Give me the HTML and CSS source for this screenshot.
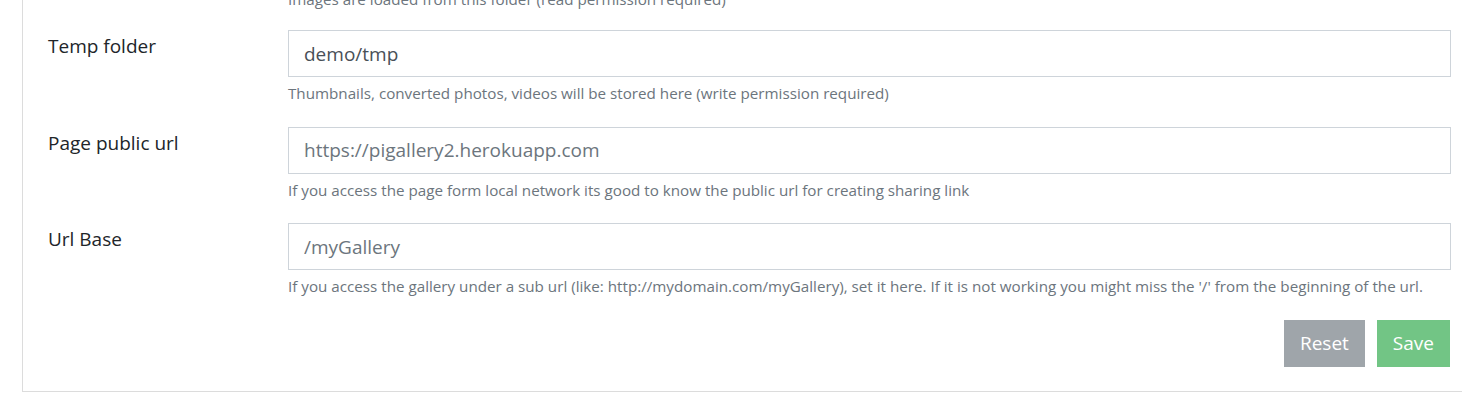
FILE: index.html
```html
<!DOCTYPE html>
<html lang="en">
<head>
<meta charset="utf-8">
<title>Settings</title>
<link rel="stylesheet" href="styles.css">
</head>
<body>
<div class="card">
  <div class="card-body">
    <div class="prev-help">Images are loaded from this folder (read permission required)</div>
    <div class="form-row">
      <label class="form-label" for="tmp">Temp folder</label>
      <div class="form-field">
        <input id="tmp" class="form-input" type="text" value="demo/tmp">
        <div class="form-help">Thumbnails, converted photos, videos will be stored here (write permission required)</div>
      </div>
    </div>
    <div class="form-row">
      <label class="form-label" for="pub">Page public url</label>
      <div class="form-field">
        <input id="pub" class="form-input" type="text" placeholder="https://pigallery2.herokuapp.com">
        <div class="form-help">If you access the page form local network its good to know the public url for creating sharing link</div>
      </div>
    </div>
    <div class="form-row">
      <label class="form-label" for="base">Url Base</label>
      <div class="form-field">
        <input id="base" class="form-input" type="text" placeholder="/myGallery">
        <div class="form-help">If you access the gallery under a sub url (like: http://mydomain.com/myGallery), set it here. If it is not working you might miss the '/' from the beginning of the url.</div>
      </div>
    </div>
    <div class="actions">
      <button class="btn btn-reset" disabled>Reset</button>
      <button class="btn btn-save" disabled>Save</button>
    </div>
  </div>
</div>
</body>
</html>
```
FILE: styles.css
```css
html, body {
  margin: 0;
  padding: 0;
  background: #ffffff;
  font-family: "Open Sans", "Noto Sans", sans-serif;
  color: #212529;
  overflow: hidden;
}

.card {
  margin-left: 22px;
  margin-top: -12px;
  width: 1460px;
  border-left: 1px solid #dcdcdc;
  border-bottom: 1px solid #dcdcdc;
}

.card-body {
  padding: 0 0 24px 25px;
}

.prev-help {
  margin-left: 240px;
  font-size: 15.2px;
  line-height: 22px;
  color: #6c757d;
  margin-bottom: 20px;
}

.form-row {
  display: flex;
  margin-bottom: 22.5px;
}

.form-label {
  width: 240px;
  flex: none;
  font-size: 19px;
  line-height: 30px;
  padding-top: 1px;
}

.form-field {
  width: 1163px;
  flex: none;
}

.form-input {
  display: block;
  box-sizing: border-box;
  width: 100%;
  height: 47px;
  margin: 0;
  padding: 0 15px;
  border: 1px solid #ced4da;
  border-radius: 0;
  font-family: inherit;
  font-size: 19px;
  color: #495057;
  background: #fff;
  outline: none;
}

.form-input::placeholder {
  color: #6c757d;
  opacity: 1;
}

.form-help {
  margin-top: 5px;
  font-size: 15.2px;
  line-height: 22px;
  color: #6c757d;
}

.actions {
  display: flex;
  justify-content: flex-end;
  gap: 12px;
  width: 1402px;
}

.btn {
  height: 47px;
  padding: 0 16px;
  border: none;
  border-radius: 0;
  font-family: inherit;
  font-size: 19px;
  color: #fff;
}

.btn-reset {
  background: #9fa5aa;
}

.btn-save {
  background: #72c585;
}
```
